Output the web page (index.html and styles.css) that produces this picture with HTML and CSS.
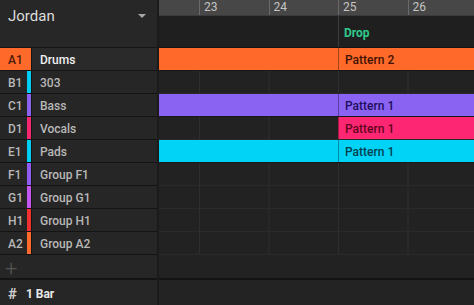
FILE: index.html
```html
<!DOCTYPE html>
<html>
<head>
<meta charset="utf-8">
<link rel="stylesheet" href="styles.css">
</head>
<body>
<div class="app">
  <aside class="side">
    <div class="side-head">
      <span class="title">Jordan</span>
      <span class="caret"></span>
    </div>
    <div class="groups">
      <div class="grp sel"><span class="lbl" style="--c:#ff6a2b">A1</span><span class="stripe" style="--c:#ff6a2b"></span><span class="name">Drums</span></div>
      <div class="grp"><span class="lbl">B1</span><span class="stripe" style="--c:#00cdf2"></span><span class="name">303</span></div>
      <div class="grp"><span class="lbl">C1</span><span class="stripe" style="--c:#8a63f0"></span><span class="name">Bass</span></div>
      <div class="grp"><span class="lbl">D1</span><span class="stripe" style="--c:#f5286f"></span><span class="name">Vocals</span></div>
      <div class="grp"><span class="lbl">E1</span><span class="stripe" style="--c:#00cdf2"></span><span class="name">Pads</span></div>
      <div class="grp"><span class="lbl">F1</span><span class="stripe" style="--c:#8f5cf2"></span><span class="name">Group F1</span></div>
      <div class="grp"><span class="lbl">G1</span><span class="stripe" style="--c:#c455ee"></span><span class="name">Group G1</span></div>
      <div class="grp"><span class="lbl">H1</span><span class="stripe" style="--c:#f0302e"></span><span class="name">Group H1</span></div>
      <div class="grp"><span class="lbl">A2</span><span class="stripe" style="--c:#ff6a2b"></span><span class="name">Group A2</span></div>
    </div>
    <div class="add">+</div>
    <div class="foot"><span class="hash">#</span><span>1 Bar</span></div>
  </aside>
  <main class="arr">
    <div class="ruler">
      <div class="bar first"></div>
      <div class="bar">23</div>
      <div class="bar">24</div>
      <div class="bar">25</div>
      <div class="bar">26</div>
    </div>
    <div class="scenes">
      <div class="scene-spacer"></div>
      <div class="scene">Drop</div>
    </div>
    <div class="tracks">
      <div class="trk"><div class="clip orange pre"></div><div class="clip orange">Pattern 2</div></div>
      <div class="trk"></div>
      <div class="trk"><div class="clip purple pre"></div><div class="clip purple">Pattern 1</div></div>
      <div class="trk"><div class="pre"></div><div class="clip pink">Pattern 1</div></div>
      <div class="trk"><div class="clip cyan pre"></div><div class="clip cyan">Pattern 1</div></div>
      <div class="trk"></div>
      <div class="trk"></div>
      <div class="trk"></div>
      <div class="trk"></div>
    </div>
    <div class="add-r"></div>
    <div class="foot-r"></div>
  </main>
</div>
</body>
</html>
```
FILE: styles.css
```css
* { box-sizing: border-box; }
html, body { margin: 0; padding: 0; }
body {
  background: #1b1b1b;
  font-family: Roboto, "Liberation Sans", sans-serif;
  width: 474px;
  height: 305px;
  overflow: hidden;
}
.app {
  display: flex;
  height: 305px;
}
.side {
  width: 157px;
  flex: none;
  background: #262626;
  display: flex;
  flex-direction: column;
}
.side-head {
  height: 48px;
  display: flex;
  align-items: flex-start;
  justify-content: space-between;
  padding: 6px 11px 0 8px;
  border-bottom: 1px solid #141414;
  background: #272727;
}
.title {
  color: #dcdcdc;
  font-size: 15px;
  line-height: 20px;
}
.caret {
  margin-top: 8px;
  width: 0; height: 0;
  border-left: 4px solid transparent;
  border-right: 4px solid transparent;
  border-top: 4px solid #a8a8a8;
}
.groups { display: flex; flex-direction: column; }
.grp {
  height: 23px;
  display: flex;
  align-items: stretch;
  border-bottom: 1px solid #141414;
  color: #b8b8b8;
  font-size: 12px;
  font-weight: 500;
}
.lbl {
  width: 27px;
  display: flex;
  align-items: center;
  padding: 2px 0 0 8px;
}
.stripe {
  width: 4px;
  background: var(--c);
}
.name {
  display: flex;
  align-items: center;
  padding: 2px 0 0 8px;
  flex: 1;
  border-left: 1px solid #141414;
}
.grp.sel .lbl {
  background: var(--c);
  color: #4a1b06;
}
.grp.sel .name { color: #f2f2f2; background: #2a2a2a; }
.add {
  height: 25px;
  color: #555555;
  font-size: 22px;
  font-weight: 300;
  line-height: 27px;
  padding-left: 5px;
  border-bottom: 2px solid #141414;
}
.foot {
  flex: 1;
  display: flex;
  align-items: center;
  gap: 9px;
  padding: 3px 0 0 8px;
  color: #e8e8e8;
  font-size: 12px;
  font-weight: 700;
  background: #262626;
}
.hash { font-size: 15px; font-weight: 700; color: #cfcfcf; }

.arr {
  flex: 1;
  margin-left: 2px;
  display: flex;
  flex-direction: column;
  background: #222222;
}
.ruler {
  height: 16px;
  display: flex;
  background: #474747;
  border-bottom: 1px solid #3a3a3a;
  flex: none;
}
.bar {
  width: 69.5px;
  flex: none;
  border-left: 1px solid #6a6a6a;
  color: #c4c4c4;
  font-size: 12px;
  line-height: 15px;
  padding-left: 4px;
}
.bar.first { width: 40px; border-left: 0; }
.scenes {
  height: 32px;
  display: flex;
  background: #1f1f1f;
  border-bottom: 1px solid #141414;
  flex: none;
}
.scene-spacer { width: 179px; flex: none; }
.scene {
  flex: 1;
  border-left: 1px solid #3c3c3c;
  color: #2fc98b;
  font-size: 12px;
  font-weight: 700;
  padding: 10px 0 0 5px;
}
.tracks {
  display: flex;
  flex-direction: column;
  background-color: #222222;
  background-image: linear-gradient(to right, #2e2e2e 1px, transparent 1px);
  background-size: 69.5px 100%;
  background-position: 40px 0;
}
.trk {
  height: 23px;
  display: flex;
  border-bottom: 1px solid #2a2a2a;
}
.pre { width: 179px; flex: none; }
.clip {
  flex: 1;
  display: flex;
  align-items: center;
  padding: 2px 0 0 6px;
  font-size: 12px;
  font-weight: 500;
  border-left: 1px solid rgba(0,0,0,0.35);
}
.clip.pre { flex: none; border-left: 0; }
.orange { background: #ff6a2b; color: #3f1303; }
.purple { background: #8a63f3; color: #1e0e5c; }
.pink { background: #fd2672; color: #63051f; }
.cyan { background: #00d3f6; color: #023f4e; }
.trk:nth-child(1), .trk:nth-child(3), .trk:nth-child(5) { border-bottom-color: #171717; }
.add-r {
  height: 25px;
  background: #222222;
  border-bottom: 2px solid #141414;
  flex: none;
}
.foot-r { flex: 1; background: #232323; }
```
